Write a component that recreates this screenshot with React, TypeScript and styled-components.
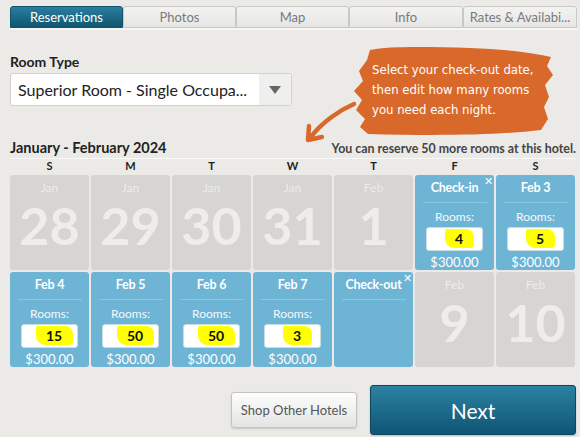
import React from "react";
import styled, { createGlobalStyle } from "styled-components";

const Global = createGlobalStyle`
  html, body { margin: 0; padding: 0; }
  body {
    background: #ebeae6;
    font-family: "Lato", "Noto Sans", sans-serif;
    color: #333;
    width: 580px;
    height: 437px;
    overflow: hidden;
  }
`;

const Page = styled.div`
  position: relative;
  padding: 6px 3px 0 10px;
  display: flex;
  flex-direction: column;
`;

const Tabs = styled.div`
  display: flex;
  border-bottom: 2px solid #f7f6f3;
`;

const Tab = styled.div<{ $active?: boolean; $w: number }>`
  width: ${(p) => p.$w}px;
  height: 22px;
  box-sizing: border-box;
  display: flex;
  align-items: center;
  justify-content: center;
  font-size: 13px;
  white-space: nowrap;
  border-radius: 3px 3px 0 0;
  border: 1px solid ${(p) => (p.$active ? "#0f5370" : "#c9c8c4")};
  background: ${(p) =>
    p.$active
      ? "linear-gradient(#2a7e9e, #10566f)"
      : "linear-gradient(#f3f3f2, #e6e6e4)"};
  color: ${(p) => (p.$active ? "#fff" : "#7a7a7a")};
`;

const Label = styled.div`
  margin-top: 23px;
  font-size: 14px;
  font-weight: 700;
  color: #222;
  line-height: 17px;
`;

const Select = styled.div`
  margin-top: 3px;
  width: 282px;
  height: 33px;
  box-sizing: border-box;
  display: flex;
  background: #fff;
  border: 1px solid #d2d1cd;
  border-radius: 3px;
`;

const SelectText = styled.div`
  flex: 1;
  display: flex;
  align-items: center;
  padding-left: 7px;
  font-size: 16px;
  color: #222;
  white-space: nowrap;
`;

const SelectArrow = styled.div`
  width: 32px;
  background: #efefed;
  display: flex;
  align-items: center;
  justify-content: center;
  border-radius: 0 3px 3px 0;
  &::after {
    content: "";
    border-left: 6px solid transparent;
    border-right: 6px solid transparent;
    border-top: 8px solid #666;
  }
`;

const CalHeader = styled.div`
  margin-top: 33px;
  display: flex;
  justify-content: space-between;
  align-items: flex-end;
  padding-bottom: 2px;
  border-bottom: 1px solid #fbfbf9;
  margin-right: 1px;
`;

const Month = styled.div`
  font-size: 14.5px;
  font-weight: 700;
  color: #222;
  line-height: 17px;
`;

const Note = styled.div`
  font-size: 12.4px;
  font-weight: 700;
  color: #444;
  line-height: 15px;
`;

const Grid = styled.div`
  display: grid;
  grid-template-columns: repeat(7, 79px);
  column-gap: 2px;
  row-gap: 2px;
`;

const DayName = styled.div`
  text-align: center;
  font-size: 11px;
  font-weight: 700;
  color: #222;
  height: 14px;
  line-height: 14px;
`;

const Cell = styled.div<{ $kind: "off" | "on" }>`
  position: relative;
  height: 95px;
  border-radius: 3px;
  box-sizing: border-box;
  display: flex;
  flex-direction: column;
  align-items: center;
  background: ${(p) => (p.$kind === "on" ? "#6eb4d5" : "#d6d5d2")};
`;

const OffMonth = styled.div`
  margin-top: 5px;
  font-size: 12px;
  color: #edece9;
  line-height: 15px;
`;

const OffNum = styled.div`
  font-size: 52px;
  font-weight: 700;
  color: #eeede9;
  line-height: 56px;
  margin-top: 2px;
`;

const Title = styled.div`
  margin-top: 5px;
  font-size: 12.5px;
  font-weight: 700;
  color: #fff;
  line-height: 16px;
  letter-spacing: -0.2px;
  white-space: nowrap;
`;

const Divider = styled.div`
  width: 64px;
  height: 1px;
  background: #8ec6e0;
  margin-top: 6px;
`;

const RoomsLabel = styled.div`
  margin-top: 6px;
  font-size: 12px;
  color: #f4f9fc;
  line-height: 15px;
`;

const RoomInput = styled.div`
  margin-top: 3px;
  width: 57px;
  height: 25px;
  box-sizing: border-box;
  background: #fff;
  border: 1px solid #c9dde7;
  border-radius: 3px;
  display: flex;
  align-items: center;
  justify-content: center;
`;

const Highlight = styled.span`
  background: #ffff00;
  font-size: 14px;
  font-weight: 700;
  color: #111;
  padding: 1px 11px 1px 10px;
  margin-left: 10px;
  border-radius: 2px 8px 4px 9px;
  line-height: 17px;
`;

const Price = styled.div`
  margin-top: 3px;
  font-size: 13px;
  color: #fff;
  line-height: 16px;
`;

const Close = styled.div`
  position: absolute;
  top: 0px;
  right: 1px;
  color: #fff;
  font-size: 11px;
  line-height: 11px;
`;

const Footer = styled.div`
  display: flex;
  justify-content: flex-end;
  align-items: center;
  gap: 13px;
  margin-top: 18px;
  margin-right: 1px;
`;

const ShopBtn = styled.div`
  width: 126px;
  height: 36px;
  box-sizing: border-box;
  display: flex;
  align-items: center;
  justify-content: center;
  font-size: 13px;
  color: #555;
  border: 1px solid #c4c4c2;
  border-radius: 3px;
  background: linear-gradient(#fdfdfd, #e4e4e3);
  box-shadow: 0 1px 2px rgba(0, 0, 0, 0.15);
`;

const NextBtn = styled.div`
  width: 206px;
  height: 50px;
  box-sizing: border-box;
  display: flex;
  align-items: center;
  justify-content: center;
  font-size: 21px;
  color: #fff;
  border: 1px solid #0d4862;
  border-radius: 3px;
  background: linear-gradient(#2c81a2, #0f5574);
  box-shadow: 0 1px 2px rgba(0, 0, 0, 0.2);
`;

const Callout = styled.div`
  position: absolute;
  left: 300px;
  top: 44px;
  width: 260px;
  height: 100px;
`;

const CalloutText = styled.div`
  position: absolute;
  left: 72px;
  top: 16px;
  font-family: "DejaVu Sans Condensed", "DejaVu Sans", sans-serif;
  font-size: 13px;
  line-height: 20px;
  color: #fff;
  white-space: nowrap;
`;

type Day =
  | { kind: "off"; m: string; d: number }
  | { kind: "on"; title: string; rooms?: number; close?: boolean };

const days: Day[] = [
  { kind: "off", m: "Jan", d: 28 },
  { kind: "off", m: "Jan", d: 29 },
  { kind: "off", m: "Jan", d: 30 },
  { kind: "off", m: "Jan", d: 31 },
  { kind: "off", m: "Feb", d: 1 },
  { kind: "on", title: "Check-in", rooms: 4, close: true },
  { kind: "on", title: "Feb 3", rooms: 5 },
  { kind: "on", title: "Feb 4", rooms: 15 },
  { kind: "on", title: "Feb 5", rooms: 50 },
  { kind: "on", title: "Feb 6", rooms: 50 },
  { kind: "on", title: "Feb 7", rooms: 3 },
  { kind: "on", title: "Check-out", close: true },
  { kind: "off", m: "Feb", d: 9 },
  { kind: "off", m: "Feb", d: 10 },
];

const tabs = [
  { t: "Reservations", w: 113 },
  { t: "Photos", w: 113 },
  { t: "Map", w: 113 },
  { t: "Info", w: 114 },
  { t: "Rates & Availabi...", w: 114 },
];

export default function App() {
  return (
    <>
      <Global />
      <Page>
        <Tabs>
          {tabs.map((t, i) => (
            <Tab key={t.t} $w={t.w} $active={i === 0}>
              {t.t}
            </Tab>
          ))}
        </Tabs>
        <Label>Room Type</Label>
        <Select>
          <SelectText>Superior Room - Single Occupa...</SelectText>
          <SelectArrow />
        </Select>
        <CalHeader>
          <Month>January - February 2024</Month>
          <Note>You can reserve 50 more rooms at this hotel.</Note>
        </CalHeader>
        <Grid>
          {["S", "M", "T", "W", "T", "F", "S"].map((d, i) => (
            <DayName key={i}>{d}</DayName>
          ))}
          {days.map((d, i) =>
            d.kind === "off" ? (
              <Cell key={i} $kind="off">
                <OffMonth>{d.m}</OffMonth>
                <OffNum>{d.d}</OffNum>
              </Cell>
            ) : (
              <Cell key={i} $kind="on">
                {d.close && <Close>✕</Close>}
                <Title>{d.title}</Title>
                <Divider />
                {d.rooms !== undefined && (
                  <>
                    <RoomsLabel>Rooms:</RoomsLabel>
                    <RoomInput>
                      <Highlight>{d.rooms}</Highlight>
                    </RoomInput>
                    <Price>$300.00</Price>
                  </>
                )}
              </Cell>
            )
          )}
        </Grid>
        <Footer>
          <ShopBtn>Shop Other Hotels</ShopBtn>
          <NextBtn>Next</NextBtn>
        </Footer>
        <Callout>
          <svg width="260" height="100" viewBox="0 0 260 100">
            <path
              d="M70 6 C90 2 130 3 170 4 C200 5 230 8 251 13 L247 22 L253 31 L245 41 L249 53 L244 63 L248 75 L241 86 C200 91 140 92 68 90 L60 83 L65 75 L56 66 L62 56 L54 47 L63 37 L59 27 L67 16 Z"
              fill="#d9692b"
            />
            <path
              d="M54 60 C40 66 22 78 10 94"
              stroke="#d9692b"
              strokeWidth="4.5"
              fill="none"
              strokeLinecap="round"
            />
            <path
              d="M9 82 L8 96 L22 93"
              stroke="#d9692b"
              strokeWidth="4.5"
              fill="none"
              strokeLinecap="round"
              strokeLinejoin="round"
            />
          </svg>
          <CalloutText>
            Select your check-out date,
            <br />
            then edit how many rooms
            <br />
            you need each night.
          </CalloutText>
        </Callout>
      </Page>
    </>
  );
}
